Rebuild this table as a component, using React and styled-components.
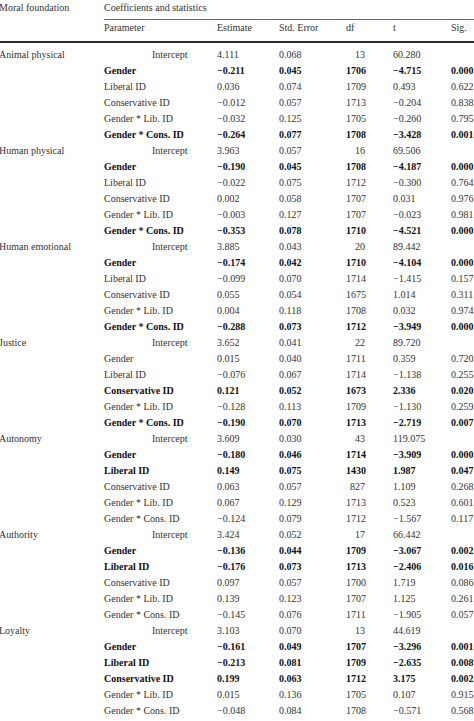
import React from 'react';
import styled, { createGlobalStyle } from 'styled-components';

const GlobalStyle = createGlobalStyle`
  html, body {
    margin: 0;
    padding: 0;
    background: #ffffff;
    overflow: hidden;
  }
`;

const M = '\u2212';

const groups = [
  {
    name: 'Animal physical',
    intercept: ['4.111', '0.068', '13', '60.280'],
    rows: [
      ['Gender', `${M}0.211`, '0.045', '1706', `${M}4.715`, '0.000', true],
      ['Liberal ID', '0.036', '0.074', '1709', '0.493', '0.622'],
      ['Conservative ID', `${M}0.012`, '0.057', '1713', `${M}0.204`, '0.838'],
      ['Gender * Lib. ID', `${M}0.032`, '0.125', '1705', `${M}0.260`, '0.795'],
      ['Gender * Cons. ID', `${M}0.264`, '0.077', '1708', `${M}3.428`, '0.001', true],
    ],
  },
  {
    name: 'Human physical',
    intercept: ['3.963', '0.057', '16', '69.506'],
    rows: [
      ['Gender', `${M}0.190`, '0.045', '1708', `${M}4.187`, '0.000', true],
      ['Liberal ID', `${M}0.022`, '0.075', '1712', `${M}0.300`, '0.764'],
      ['Conservative ID', '0.002', '0.058', '1707', '0.031', '0.976'],
      ['Gender * Lib. ID', `${M}0.003`, '0.127', '1707', `${M}0.023`, '0.981'],
      ['Gender * Cons. ID', `${M}0.353`, '0.078', '1710', `${M}4.521`, '0.000', true],
    ],
  },
  {
    name: 'Human emotional',
    intercept: ['3.885', '0.043', '20', '89.442'],
    rows: [
      ['Gender', `${M}0.174`, '0.042', '1710', `${M}4.104`, '0.000', true],
      ['Liberal ID', `${M}0.099`, '0.070', '1714', `${M}1.415`, '0.157'],
      ['Conservative ID', '0.055', '0.054', '1675', '1.014', '0.311'],
      ['Gender * Lib. ID', '0.004', '0.118', '1708', '0.032', '0.974'],
      ['Gender * Cons. ID', `${M}0.288`, '0.073', '1712', `${M}3.949`, '0.000', true],
    ],
  },
  {
    name: 'Justice',
    intercept: ['3.652', '0.041', '22', '89.720'],
    rows: [
      ['Gender', '0.015', '0.040', '1711', '0.359', '0.720'],
      ['Liberal ID', `${M}0.076`, '0.067', '1714', `${M}1.138`, '0.255'],
      ['Conservative ID', '0.121', '0.052', '1673', '2.336', '0.020', true],
      ['Gender * Lib. ID', `${M}0.128`, '0.113', '1709', `${M}1.130`, '0.259'],
      ['Gender * Cons. ID', `${M}0.190`, '0.070', '1713', `${M}2.719`, '0.007', true],
    ],
  },
  {
    name: 'Autonomy',
    intercept: ['3.609', '0.030', '43', '119.075'],
    rows: [
      ['Gender', `${M}0.180`, '0.046', '1714', `${M}3.909`, '0.000', true],
      ['Liberal ID', '0.149', '0.075', '1430', '1.987', '0.047', true],
      ['Conservative ID', '0.063', '0.057', '827', '1.109', '0.268'],
      ['Gender * Lib. ID', '0.067', '0.129', '1713', '0.523', '0.601'],
      ['Gender * Cons. ID', `${M}0.124`, '0.079', '1712', `${M}1.567`, '0.117'],
    ],
  },
  {
    name: 'Authority',
    intercept: ['3.424', '0.052', '17', '66.442'],
    rows: [
      ['Gender', `${M}0.136`, '0.044', '1709', `${M}3.067`, '0.002', true],
      ['Liberal ID', `${M}0.176`, '0.073', '1713', `${M}2.406`, '0.016', true],
      ['Conservative ID', '0.097', '0.057', '1700', '1.719', '0.086'],
      ['Gender * Lib. ID', '0.139', '0.123', '1707', '1.125', '0.261'],
      ['Gender * Cons. ID', `${M}0.145`, '0.076', '1711', `${M}1.905`, '0.057'],
    ],
  },
  {
    name: 'Loyalty',
    intercept: ['3.103', '0.070', '13', '44.619'],
    rows: [
      ['Gender', `${M}0.161`, '0.049', '1707', `${M}3.296`, '0.001', true],
      ['Liberal ID', `${M}0.213`, '0.081', '1709', `${M}2.635`, '0.008', true],
      ['Conservative ID', '0.199', '0.063', '1712', '3.175', '0.002', true],
      ['Gender * Lib. ID', '0.015', '0.136', '1705', '0.107', '0.915'],
      ['Gender * Cons. ID', `${M}0.048`, '0.084', '1708', `${M}0.571`, '0.568'],
    ],
  },
];

const Table = styled.table`
  border-collapse: separate;
  border-spacing: 0;
  table-layout: fixed;
  width: 492px;
  margin: 2px 0 0 -1px;
  font-family: "Liberation Serif", "Times New Roman", serif;
  font-size: 10px;
  color: #333;
`;

const TopCell = styled.th`
  text-align: left;
  font-weight: normal;
  vertical-align: top;
  padding: 0;
  height: 17px;
  line-height: 12px;
  border-bottom: ${p => (p.ruled ? '1px solid #6a6a6a' : 'none')};
`;

const HeadCell = styled.th`
  text-align: left;
  font-weight: normal;
  vertical-align: top;
  padding: 2px 0 0 0;
  height: 19px;
  line-height: 12px;
  border-bottom: 2px solid #2a2a2a;
`;

const Cell = styled.td`
  padding: ${p => (p.first ? '4px' : '0')} ${p => (p.right ? '28px' : '0')} 0 ${p => p.indent || 0}px;
  height: 16px;
  line-height: 16px;
  white-space: nowrap;
  overflow: hidden;
  text-align: ${p => (p.right ? 'right' : 'left')};
  font-weight: ${p => (p.bold ? 'bold' : 'normal')};
  color: ${p => (p.bold ? '#111' : '#333')};
`;

function Row({ label, param, values, bold, intercept, first }) {
  const [est, se, df, t, sig] = values;
  return (
    <tr>
      <Cell first={first}>{label}</Cell>
      <Cell first={first} bold={bold} indent={intercept ? 48 : 0}>{param}</Cell>
      <Cell first={first} bold={bold}>{est}</Cell>
      <Cell first={first} bold={bold}>{se}</Cell>
      <Cell first={first} bold={bold} right>{df}</Cell>
      <Cell first={first} bold={bold}>{t}</Cell>
      <Cell first={first} bold={bold}>{sig}</Cell>
    </tr>
  );
}

export default function App() {
  return (
    <>
      <GlobalStyle />
      <Table>
        <colgroup>
          <col style={{ width: 105 }} />
          <col style={{ width: 113 }} />
          <col style={{ width: 62 }} />
          <col style={{ width: 67 }} />
          <col style={{ width: 47 }} />
          <col style={{ width: 58 }} />
          <col style={{ width: 40 }} />
        </colgroup>
        <thead>
          <tr>
            <TopCell>Moral foundation</TopCell>
            <TopCell ruled colSpan={6}>Coefficients and statistics</TopCell>
          </tr>
          <tr>
            <HeadCell />
            <HeadCell>Parameter</HeadCell>
            <HeadCell>Estimate</HeadCell>
            <HeadCell>Std. Error</HeadCell>
            <HeadCell>df</HeadCell>
            <HeadCell>t</HeadCell>
            <HeadCell>Sig.</HeadCell>
          </tr>
        </thead>
        <tbody>
          {groups.map((g, gi) => (
            <React.Fragment key={g.name}>
              <Row
                first={gi === 0}
                label={g.name}
                param="Intercept"
                intercept
                values={[...g.intercept, '']}
              />
              {g.rows.map(r => (
                <Row
                  key={r[0]}
                  label=""
                  param={r[0]}
                  values={r.slice(1, 6)}
                  bold={!!r[6]}
                />
              ))}
            </React.Fragment>
          ))}
        </tbody>
      </Table>
    </>
  );
}
